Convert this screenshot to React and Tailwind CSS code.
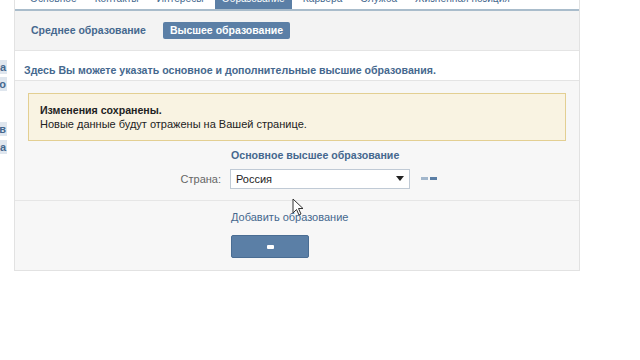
import React from 'react';

const tabs = [
  { label: 'Основное' },
  { label: 'Контакты' },
  { label: 'Интересы' },
  { label: 'Образование', active: true },
  { label: 'Карьера' },
  { label: 'Служба' },
  { label: 'Жизненная позиция' },
];

const sideBits = [
  { ch: 'а', mt: 'mt-[60px]' },
  { ch: 'о', mt: 'mt-[3px]' },
  { ch: 'в', mt: 'mt-[31px]' },
  { ch: 'а', mt: 'mt-[4px]' },
];

const App = () => {
  return (
    <div className="w-[640px] h-[360px] bg-white overflow-hidden flex text-[11px] text-[#222] font-['Liberation_Sans',Arial,sans-serif]">
      {/* cut-off left menu */}
      <div className="w-[14px] flex flex-col">
        {sideBits.map((b, i) => (
          <div key={i} className={`${b.mt} w-[7px] h-[14px] bg-[#dfe6ee] overflow-hidden flex justify-end`}>
            <span className="text-[#45688e] font-bold leading-[14px] pr-[1px]">{b.ch}</span>
          </div>
        ))}
      </div>

      <div className="w-[566px] h-[271px] flex flex-col border-x border-b border-[#e2e2e2]">
        {/* main tabs, top is off screen */}
        <div className="-mt-[12px] h-[23px] flex pl-[8px] gap-[4px] border-b-[2px] border-[#a9bccb] bg-white text-[10.2px]">
          {tabs.map((t) => (
            <div
              key={t.label}
              className={`px-[7px] h-full flex items-center ${
                t.active ? 'bg-[#5b7fa6] text-white' : 'text-[#45688e]'
              }`}
            >
              {t.label}
            </div>
          ))}
        </div>

        {/* sub tabs */}
        <div className="h-[40px] bg-[#f3f3f3] border-b border-[#e4e4e4] flex items-center pl-[16px] gap-[17px] text-[10.5px]">
          <span className="font-bold text-[#45688e]">Среднее образование</span>
          <span className="bg-[#5b7fa6] text-white font-bold px-[7px] h-[17px] flex items-center rounded-[2px]">
            Высшее образование
          </span>
        </div>

        {/* info line */}
        <div className="h-[30px] bg-white border-b border-[#e4e4e4] flex items-end pb-[1px] pl-[9px]">
          <span className="font-bold text-[#45688e] text-[10.6px]">
            Здесь Вы можете указать основное и дополнительные высшие образования.
          </span>
        </div>

        <div className="flex-1 bg-[#f7f7f7] flex flex-col">
          {/* saved message */}
          <div className="mt-[12px] mx-[13px] h-[48px] bg-[#f9f3e2] border border-[#e3cf92] flex flex-col justify-center pl-[11px] gap-[1px] leading-[13px]">
            <span className="font-bold text-[#222] text-[10.6px]">Изменения сохранены.</span>
            <span className="text-[#222]">Новые данные будут отражены на Вашей странице.</span>
          </div>

          <div className="mt-[7px] pl-[216px] font-bold text-[#45688e] text-[10.6px]">Основное высшее образование</div>

          <div className="mt-[5px] flex items-center">
            <span className="w-[215px] text-right pr-[9px] text-[#666]">Страна:</span>
            <div className="w-[180px] h-[20px] bg-white border border-[#c0cad5] flex items-center justify-between pl-[5px] pr-[5px]">
              <span>Россия</span>
              <svg width="8" height="5" viewBox="0 0 8 5">
                <path d="M0 0 L8 0 L4 5 Z" fill="#222" />
              </svg>
            </div>
            <div className="ml-[11px] flex gap-[2px]">
              <span className="w-[7px] h-[3px] bg-[#a2b7cc]" />
              <span className="w-[7px] h-[3px] bg-[#5b7fa6]" />
            </div>
          </div>

          <div className="mt-[11px] border-t border-[#e6e6e6]" />

          <div className="mt-[8px] pl-[216px] relative">
            <span className="text-[#45688e]">Добавить образование</span>
            <svg className="absolute left-[277px] -top-[11px]" width="12" height="18" viewBox="0 0 12 18">
              <path d="M1 1 L1 15 L4.5 11.5 L7 17 L9 16 L6.5 10.5 L11 10.5 Z" fill="#fff" stroke="#333" strokeWidth="1" strokeLinejoin="round" />
            </svg>
          </div>

          <div className="mt-[10px] ml-[216px] w-[78px] h-[23px] bg-[#5b7fa6] border border-[#4a6d93] rounded-[2px] flex items-center justify-center">
            <span className="w-[7px] h-[4px] bg-white rounded-[1px]" />
          </div>
        </div>
      </div>
    </div>
  );
};

export default App;
